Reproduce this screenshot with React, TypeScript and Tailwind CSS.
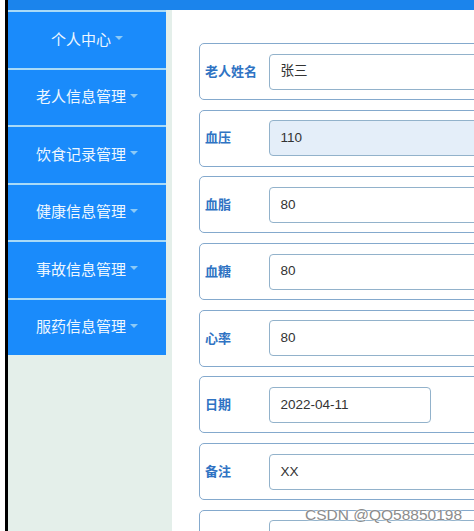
import React from "react";

const menu = ["个人中心", "老人信息管理", "饮食记录管理", "健康信息管理", "事故信息管理", "服药信息管理"];

type Row = { label: string; value: string; bg?: boolean; narrow?: boolean };
const rows: Row[] = [
  { label: "老人姓名", value: "张三" },
  { label: "血压", value: "110", bg: true },
  { label: "血脂", value: "80" },
  { label: "血糖", value: "80" },
  { label: "心率", value: "80" },
  { label: "日期", value: "2022-04-11", narrow: true },
  { label: "备注", value: "XX" },
  { label: "", value: "" },
];

export default function App() {
  const cjk = { fontFamily: '"Liberation Sans", "Noto Sans CJK SC", sans-serif' };
  return (
    <div className="relative flex w-[474px] h-[531px] overflow-hidden bg-white" style={cjk}>
      <div className="w-[5px] shrink-0 bg-white" />
      <div className="w-[3px] shrink-0 bg-black" />
      <div className="flex flex-1 flex-col min-w-0">
        <div className="h-[10px] shrink-0 bg-[#1b84ec]" />
        <div className="flex flex-1 min-h-0">
          <aside className="w-[164px] shrink-0 bg-[#e4efea]">
            <div className="w-[158px] flex flex-col">
              {menu.map((m) => (
                <div
                  key={m}
                  className="h-[57.5px] border-t-2 border-[#a9daf7] bg-[#1a8bfb] flex items-center justify-center text-[15px] text-[#eef7ff]"
                >
                  <span>{m}</span>
                  <span className="ml-[4px] mb-[3px] w-0 h-0 border-t-[4px] border-t-[#8ccaf6] border-x-[4px] border-x-transparent" />
                </div>
              ))}
            </div>
          </aside>
          <main className="flex-1 min-w-0 overflow-hidden pl-[27px] pt-[33px]">
            {rows.map((r, i) => (
              <div
                key={i}
                className="w-[340px] h-[57px] mb-[9.7px] border-[1.5px] border-[#84a9cd] rounded-[5px] flex items-center pl-[5px] pr-[10px]"
              >
                <div className="w-[63.5px] shrink-0 text-[13px] font-bold text-[#2f73c3]">{r.label}</div>
                <div
                  className={`h-[36px] border-[1.5px] border-[#92b2cb] rounded-[4px] flex items-center pl-[11px] text-[13.5px] text-[#333333] ${
                    r.narrow ? "w-[162px]" : "flex-1"
                  } ${r.bg ? "bg-[#e4eef9]" : "bg-white"}`}
                >
                  {r.value}
                </div>
              </div>
            ))}
          </main>
        </div>
      </div>
      <div
        className="absolute left-[305px] top-[503px] text-[15.5px] text-[#8c8c8c] whitespace-nowrap"
        style={{ fontFamily: '"Liberation Sans", sans-serif', textShadow: "0 0 2px #ffffff, 0 0 1px #ffffff" }}
      >
        CSDN @QQ58850198
      </div>
    </div>
  );
}
